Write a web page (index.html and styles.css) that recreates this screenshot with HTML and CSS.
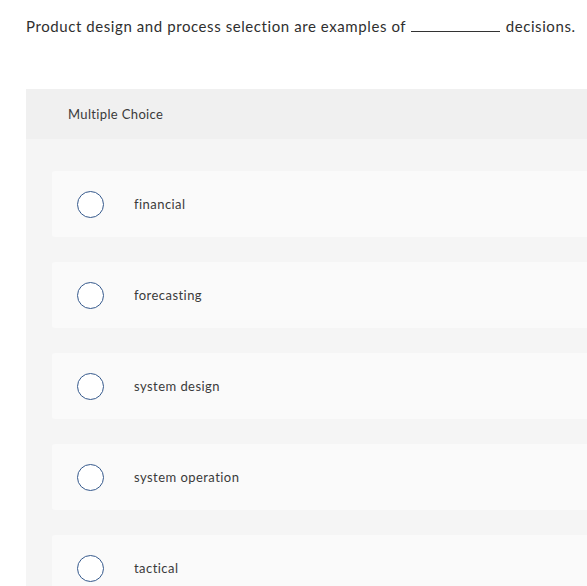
FILE: index.html
```html
<!DOCTYPE html>
<html>
<head>
<meta charset="utf-8">
<link rel="stylesheet" href="styles.css">
</head>
<body>
<div class="page">
  <p class="question">Product design and process selection are examples of <span class="blank"></span> decisions.</p>
  <div class="panel">
    <div class="panel-head">Multiple Choice</div>
    <div class="panel-body">
      <div class="option"><span class="radio"></span><span class="label">financial</span></div>
      <div class="option"><span class="radio"></span><span class="label">forecasting</span></div>
      <div class="option"><span class="radio"></span><span class="label">system design</span></div>
      <div class="option"><span class="radio"></span><span class="label">system operation</span></div>
      <div class="option"><span class="radio"></span><span class="label">tactical</span></div>
    </div>
  </div>
</div>
</body>
</html>
```
FILE: styles.css
```css
html, body {
  margin: 0;
  padding: 0;
  background: #ffffff;
  overflow: hidden;
}
body {
  font-family: Lato, "Liberation Sans", sans-serif;
  color: #333333;
  font-variant-ligatures: none;
}
.page {
  padding: 0 0 0 26px;
}
.question {
  margin: 0;
  padding-top: 16px;
  font-size: 15px;
  line-height: 20px;
  letter-spacing: 0.58px;
  color: #2f2f2f;
  white-space: nowrap;
}
.blank {
  display: inline-block;
  width: 89px;
  border-bottom: 1px solid #333;
  vertical-align: baseline;
  margin: 0 1px;
}
.panel {
  margin-top: 53px;
  background: #f5f5f5;
}
.panel-head {
  height: 50px;
  background: #f0f0f0;
  display: flex;
  align-items: center;
  padding-left: 42px;
  font-size: 13px;
  letter-spacing: 0.35px;
  color: #3a3a3a;
}
.panel-body {
  padding: 32px 0 0 26px;
  display: flex;
  flex-direction: column;
  gap: 25px;
}
.option {
  height: 66px;
  background: #fafafa;
  border-radius: 3px 0 0 3px;
  display: flex;
  align-items: center;
  padding-left: 25px;
}
.radio {
  width: 25px;
  height: 25px;
  border: 1.5px solid #35598c;
  border-radius: 50%;
  background: #ffffff;
  flex: none;
}
.label {
  margin-left: 30px;
  font-size: 13px;
  letter-spacing: 0.45px;
  color: #3a3a3a;
}
```
